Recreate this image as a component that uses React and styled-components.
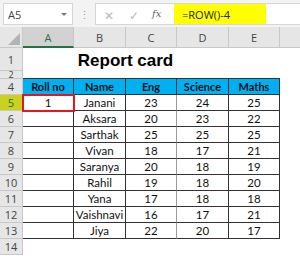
import React from "react";
import styled, { createGlobalStyle } from "styled-components";

const GlobalStyle = createGlobalStyle`
  html, body {
    margin: 0;
    padding: 0;
    background: #ffffff;
  }
  body {
    width: 300px;
    height: 256px;
    overflow: hidden;
    font-family: "Open Sans", "Noto Sans", sans-serif;
  }
`;

const columns = ["A", "B", "C", "D", "E", ""];

const rows = [
  ["Janani", 23, 24, 25],
  ["Aksara", 20, 23, 22],
  ["Sarthak", 25, 25, 25],
  ["Vivan", 18, 17, 21],
  ["Saranya", 20, 18, 19],
  ["Rahil", 19, 18, 20],
  ["Yana", 17, 18, 18],
  ["Vaishnavi", 16, 17, 21],
  ["Jiya", 22, 20, 17],
];

const headers = ["Roll no", "Name", "Eng", "Science", "Maths"];

const App = () => {
  return (
    <Page>
      <GlobalStyle />
      <TopBar>
        <NameBox>
          <NameText>A5</NameText>
          <Caret />
        </NameBox>
        <Dots>⋮</Dots>
        <FormulaBox>
          <Glyph left={8}>✕</Glyph>
          <Glyph left={33}>✓</Glyph>
          <Fx>fx</Fx>
          <Formula>=ROW()-4</Formula>
        </FormulaBox>
      </TopBar>

      <Sheet>
        {/* column headers */}
        <Corner>
          <svg width="12" height="12" viewBox="0 0 12 12">
            <polygon points="12,0 12,12 0,12" fill="#b4b4b4" />
          </svg>
        </Corner>
        {columns.map((c, i) => (
          <ColHead key={c + i} active={c === "A"} last={i === columns.length - 1}>
            {c}
          </ColHead>
        ))}

        {/* row 1 - title over B:C */}
        <RowHead>1</RowHead>
        <Blank />
        <Title>Report card</Title>
        <Blank />
        <Blank />
        <Blank />

        {/* row 2 - squeezed, label cut */}
        <RowHead squeezed>
          <Squeezed>2</Squeezed>
        </RowHead>
        <Blank edge />
        <Blank edge />
        <Blank edge />
        <Blank edge />
        <Blank edge />
        <Blank />

        {/* row 4 - table header */}
        <RowHead>4</RowHead>
        {headers.map((h) => (
          <HeadCell key={h}>{h}</HeadCell>
        ))}
        <Blank />

        {rows.map((r, i) => {
          const n = i + 5;
          return (
            <React.Fragment key={n}>
              <RowHead active={n === 5}>{n}</RowHead>
              <Cell selected={n === 5}>{n === 5 ? 1 : ""}</Cell>
              <Cell>{r[0]}</Cell>
              <Cell>{r[1]}</Cell>
              <Cell soft>{r[2]}</Cell>
              <Cell>{r[3]}</Cell>
              <Blank />
            </React.Fragment>
          );
        })}

        <RowHead>14</RowHead>
        <Blank />
        <Blank />
        <Blank />
        <Blank />
        <Blank />
        <Blank />
      </Sheet>
    </Page>
  );
};

export default App;

const Page = styled.div`
  width: 300px;
  height: 256px;
  overflow: hidden;
  background: #ffffff;
`;

const TopBar = styled.div`
  height: 27px;
  box-sizing: border-box;
  padding: 3px 0 2px 3px;
  display: flex;
  align-items: stretch;
  background: #f3f3f3;
`;

const NameBox = styled.div`
  width: 70px;
  box-sizing: border-box;
  background: #ffffff;
  border: 1px solid #d6d6d6;
  display: flex;
  align-items: center;
  justify-content: space-between;
  padding: 0 5px 0 4px;
`;

const NameText = styled.span`
  font-size: 11px;
  color: #444444;
`;

const Caret = styled.span`
  width: 0;
  height: 0;
  border-left: 3px solid transparent;
  border-right: 3px solid transparent;
  border-top: 3px solid #777777;
`;

const Dots = styled.div`
  width: 22px;
  display: flex;
  align-items: center;
  justify-content: center;
  font-size: 11px;
  color: #9a9a9a;
`;

const FormulaBox = styled.div`
  flex: 1;
  position: relative;
  background: #ffffff;
  border: 1px solid #d6d6d6;
  border-right: none;
`;

const Glyph = styled.span`
  position: absolute;
  top: 3px;
  left: ${(p) => p.left}px;
  font-size: 12px;
  color: #b8b8b8;
`;

const Fx = styled.span`
  position: absolute;
  top: 4px;
  left: 56px;
  font-family: "DejaVu Serif", serif;
  font-style: italic;
  font-size: 10px;
  color: #666666;
`;

const Formula = styled.div`
  position: absolute;
  top: 0;
  bottom: 0;
  left: 78px;
  width: 92px;
  background: #ffff00;
  display: flex;
  align-items: center;
  padding-left: 8px;
  box-sizing: border-box;
  font-size: 11px;
  color: #222222;
`;

const Sheet = styled.div`
  display: grid;
  grid-template-columns: 23px 51px 52px 51px 52px 51px 20px;
  grid-template-rows: 21px 23px 8px repeat(11, 16px);
  font-family: "Lato", "Liberation Sans", sans-serif;
`;

const Corner = styled.div`
  background: #e6e6e6;
  border-right: 1px solid #c8c8c8;
  border-bottom: 1px solid #c8c8c8;
  box-sizing: border-box;
  display: flex;
  align-items: flex-end;
  justify-content: flex-end;
  padding: 0 2px 2px 0;
`;

const ColHead = styled.div`
  box-sizing: border-box;
  background: ${(p) => (p.active ? "#d2d2d2" : "#e6e6e6")};
  border-right: ${(p) => (p.last ? "none" : "1px solid #c8c8c8")};
  border-bottom: ${(p) =>
    p.active ? "2px solid #217346" : "1px solid #c8c8c8"};
  color: ${(p) => (p.active ? "#217346" : "#444444")};
  font-family: "Open Sans", "Noto Sans", sans-serif;
  font-size: 11px;
  display: flex;
  align-items: center;
  justify-content: center;
  padding-top: ${(p) => (p.active ? "1px" : "0")};
`;

const RowHead = styled.div`
  box-sizing: border-box;
  background: ${(p) => (p.active ? "#c9d21e" : "#e6e6e6")};
  border-right: 1px solid #c8c8c8;
  border-bottom: 1px solid #c8c8c8;
  color: ${(p) => (p.active ? "#217346" : "#444444")};
  font-family: "Open Sans", "Noto Sans", sans-serif;
  font-size: 11px;
  display: flex;
  align-items: ${(p) => (p.squeezed ? "flex-end" : "center")};
  justify-content: center;
  overflow: hidden;
`;

const Squeezed = styled.span`
  display: block;
  height: 7px;
  overflow: hidden;
  font-size: 9px;
  line-height: 7px;
`;

const Blank = styled.div`
  box-sizing: border-box;
  border-bottom: ${(p) => (p.edge ? "1px solid #333333" : "none")};
`;

const Title = styled.div`
  grid-column: span 2;
  display: flex;
  align-items: center;
  justify-content: center;
  font-family: "Liberation Sans", Arial, sans-serif;
  font-weight: bold;
  font-size: 17px;
  color: #000000;
  padding-top: 2px;
`;

const HeadCell = styled.div`
  box-sizing: border-box;
  background: #00b0f0;
  border-right: 1px solid #333333;
  border-bottom: 1px solid #333333;
  font-weight: bold;
  font-size: 11px;
  color: #111111;
  display: flex;
  align-items: center;
  justify-content: center;
`;

const Cell = styled.div`
  position: relative;
  box-sizing: border-box;
  background: #ffffff;
  border-right: 1px solid #333333;
  border-left: ${(p) => (p.soft ? "1px solid #9a9a9a" : "none")};
  margin-left: ${(p) => (p.soft ? "-1px" : "0")};
  border-bottom: 1px solid #333333;
  font-size: 11.5px;
  color: #111111;
  display: flex;
  align-items: center;
  justify-content: center;
  outline: ${(p) => (p.selected ? "2px solid #e5161f" : "none")};
  outline-offset: ${(p) => (p.selected ? "-1px" : "0")};
  z-index: ${(p) => (p.selected ? 1 : 0)};
`;
